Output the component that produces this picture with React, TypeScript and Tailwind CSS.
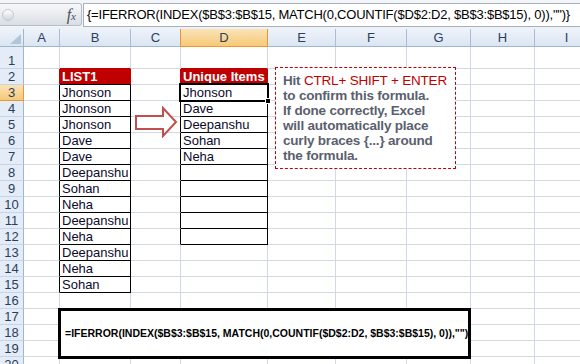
import React from "react";

const LETTERS = ["A", "B", "C", "D", "E", "F", "G", "H", "I"];
const BVALS: Record<number, string> = {
  2: "LIST1",
  3: "Jhonson",
  4: "Jhonson",
  5: "Jhonson",
  6: "Dave",
  7: "Dave",
  8: "Deepanshu",
  9: "Sohan",
  10: "Neha",
  11: "Deepanshu",
  12: "Neha",
  13: "Deepanshu",
  14: "Neha",
  15: "Sohan",
};
const DVALS: Record<number, string> = {
  2: "Unique Items",
  3: "Jhonson",
  4: "Dave",
  5: "Deepanshu",
  6: "Sohan",
  7: "Neha",
};

const ROWS = Array.from({ length: 20 }, (_, i) => i + 1);

function Corner() {
  return (
    <div className="relative border-r border-b border-r-[#9eb6ce] border-b-[#9eb6ce] bg-gradient-to-b from-[#eef3fa] to-[#dbe5f2]">
      <svg className="absolute right-[2px] bottom-[2px]" width="11" height="10" viewBox="0 0 11 10">
        <polygon points="11,0 11,10 0,10" fill="#b5c5d9" />
      </svg>
    </div>
  );
}

function ColHeader({ letter }: { letter: string }) {
  const active = letter === "D";
  return (
    <div
      className={
        active
          ? "flex items-center justify-center border-r border-b border-r-[#f29436] border-b-[#f29436] border-l border-l-[#f29436] -ml-[1px] bg-gradient-to-b from-[#fbe3b5] to-[#f5c978] text-[13px] text-[#2b3f5c]"
          : "flex items-center justify-center border-r border-b border-r-[#a9bdd6] border-b-[#9eb6ce] bg-gradient-to-b from-[#eef3fa] to-[#dbe5f2] text-[13px] text-[#2b3f5c]"
      }
    >
      {letter}
    </div>
  );
}

function RowHeader({ n }: { n: number }) {
  const active = n === 3;
  return (
    <div
      className={
        active
          ? "flex items-end justify-center border-r border-b border-r-[#f29436] border-b-[#f29436] bg-gradient-to-b from-[#fbe3b5] to-[#f5c978] text-[13px] leading-[15px] text-[#2b3f5c]"
          : "flex items-end justify-center border-r border-b border-r-[#9eb6ce] border-b-[#c5d4e8] bg-[#e4ecf7] text-[13px] leading-[15px] text-[#2b3f5c]"
      }
    >
      {n}
    </div>
  );
}

function DataCell({ r, c }: { r: number; c: number }) {
  const inB = r >= 3 && r <= 15;
  const inD = r >= 3 && r <= 12;
  let right = "border-r-[#d0d7e5]";
  if ((c === 1 || c === 2) && inB) right = "border-r-black";
  if ((c === 3 || c === 4) && inD) right = "border-r-black";
  if ((c === 1 || c === 2 || c === 3 || c === 4) && r === 2) right = "border-r-[#c00000]";
  let bottom = "border-b-[#d0d7e5]";
  if (c === 2 && r >= 2 && r <= 15) bottom = "border-b-black";
  if (c === 4 && r >= 2 && r <= 12) bottom = "border-b-black";
  if ((c === 2 || c === 4) && r === 1) bottom = "border-b-[#c00000]";
  const header = (c === 2 || c === 4) && r === 2;
  const text = c === 2 ? BVALS[r] : c === 4 ? DVALS[r] : undefined;
  return (
    <div
      className={
        "flex items-end overflow-hidden whitespace-nowrap border-r border-b pl-[2px] text-[13px] leading-[15px] " +
        right +
        " " +
        bottom +
        (header ? " bg-[#c00000] font-bold text-white" : " text-[#0a0a2a]")
      }
    >
      {text}
    </div>
  );
}

function FormulaBar() {
  return (
    <div className="flex h-[29px] border-b-[2px] border-b-[#eef1f5] bg-[#f3f5f8] pt-[3px]">
      <div className="relative flex h-[23px] w-[82px] items-center justify-end rounded-r-[3px] border border-l-0 border-[#b7bec8] bg-gradient-to-b from-[#f7f8fa] to-[#d9dee5] pr-[5px]">
        <div className="absolute left-[2px] top-[5px] h-[12px] w-[12px] rounded-full border border-[#c2c8d0] bg-gradient-to-b from-[#ffffff] to-[#cfd5dc]" />
        <span className="font-['Liberation_Serif',serif] text-[16px] italic leading-none text-[#4a4f58]">
          f<span className="text-[11px]">x</span>
        </span>
      </div>
      <div className="ml-[1px] flex h-[24px] flex-1 items-center overflow-hidden whitespace-nowrap border border-r-0 border-[#a7b1bd] bg-white pl-[3px] text-[13px] tracking-[-0.22px] text-black">
        {'{=IFERROR(INDEX($B$3:$B$15, MATCH(0,COUNTIF($D$2:D2, $B$3:$B$15), 0)),"")}'}
      </div>
    </div>
  );
}

export default function App() {
  return (
    <div className="relative h-[364px] w-[580px] overflow-hidden bg-white font-['Liberation_Sans',Arial,sans-serif]">
      <FormulaBar />
      <div className="grid grid-cols-[24px_36px_71px_50px_87px_68px_71px_64px_64px_64px] grid-rows-[18px_22px_repeat(19,16px)]">
        <Corner />
        {LETTERS.map((l) => (
          <ColHeader key={l} letter={l} />
        ))}
        {ROWS.map((r) => (
          <React.Fragment key={r}>
            <RowHeader n={r} />
            {LETTERS.map((l, ci) => (
              <DataCell key={l} r={r} c={ci + 1} />
            ))}
          </React.Fragment>
        ))}
      </div>

      {/* selected cell D3 */}
      <div className="absolute left-[179px] top-[83px] h-[19px] w-[90px] border-2 border-black" />
      <div className="absolute left-[265px] top-[98px] h-[6px] w-[6px] border border-white bg-black" />

      {/* arrow shape */}
      <svg className="absolute left-[134px] top-[106px]" width="46" height="32" viewBox="0 0 46 32">
        <polygon
          points="2,10 29,10 29,2 42,16 29,30 29,23 2,23"
          fill="white"
          stroke="#c0504d"
          strokeWidth="2"
        />
      </svg>

      {/* note box */}
      <div className="absolute left-[275px] top-[67px] h-[102px] w-[181px] border border-dashed border-[#c00000] bg-white pl-[7px] pt-[5px] text-[13.5px] font-bold leading-[15px] tracking-[-0.2px] text-[#5a606e]">
        <div className="whitespace-nowrap">
          Hit <span className="font-normal text-[#c00000]">CTRL+ SHIFT + ENTER</span>
        </div>
        <div className="whitespace-nowrap">to confirm this formula.</div>
        <div className="whitespace-nowrap">If done correctly, Excel</div>
        <div className="whitespace-nowrap">will automatically place</div>
        <div className="whitespace-nowrap">curly braces {"{...}"} around</div>
        <div className="whitespace-nowrap">the formula.</div>
      </div>

      {/* bottom formula box */}
      <div className="absolute left-[58px] top-[308px] flex h-[51px] w-[413px] items-center border-[3px] border-black bg-white pl-[4px] text-[10.5px] font-bold text-black">
        <span className="whitespace-nowrap">{'=IFERROR(INDEX($B$3:$B$15, MATCH(0,COUNTIF($D$2:D2, $B$3:$B$15), 0)),"")'}</span>
      </div>
    </div>
  );
}
